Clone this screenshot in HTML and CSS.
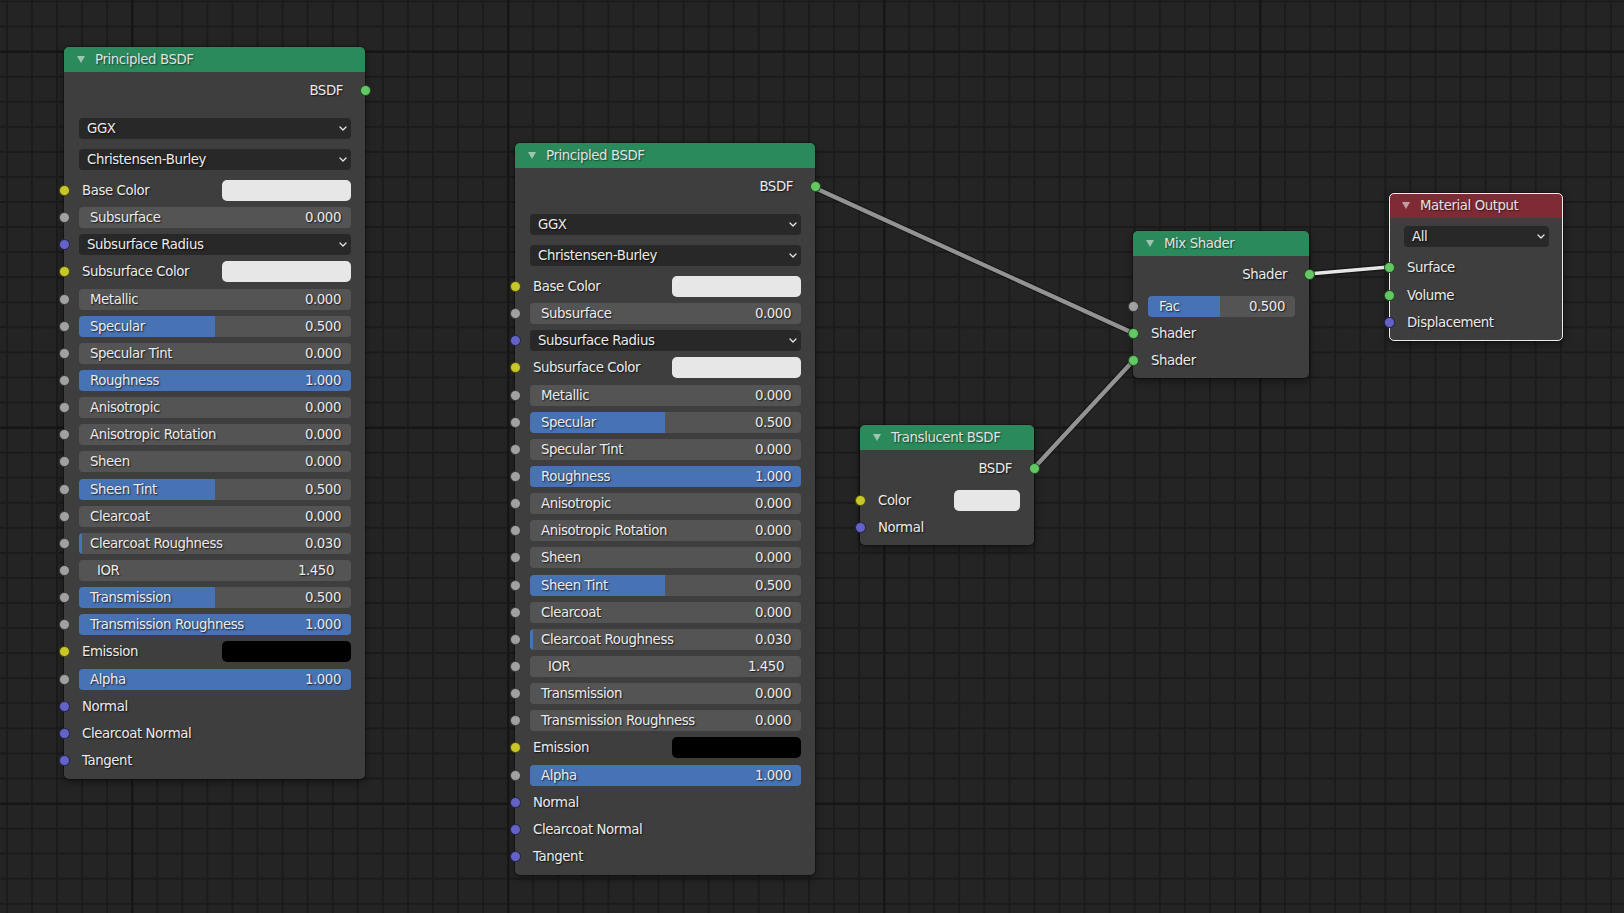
FILE: index.html
```html
<!DOCTYPE html>
<html>
<head>
<meta charset="utf-8">
<title>Shader Editor</title>
<link rel="stylesheet" href="styles.css">
</head>
<body>
<div class="canvas">
  <svg class="links" width="1624" height="913" viewBox="0 0 1624 913">
    <line class="link-outline" x1="815" y1="188" x2="1133" y2="333"/>
    <line class="link-core" x1="815" y1="188" x2="1133" y2="333"/>
    <line class="link-outline" x1="1034" y1="468" x2="1133" y2="361"/>
    <line class="link-core" x1="1034" y1="468" x2="1133" y2="361"/>
    <line class="link-outline" x1="1308" y1="274" x2="1389" y2="267"/>
    <line class="link-core hl" x1="1308" y1="274" x2="1389" y2="267"/>
  </svg>

  <!-- Principled BSDF #1 -->
  <div class="node node-p1">
    <div class="node-header shader">
      <svg class="tri" width="8" height="7" viewBox="0 0 8 7"><polygon points="0,0 8,0 4,7"/></svg>
      <span>Principled BSDF</span>
    </div>
    <div class="node-body">
      <div class="row out"><span class="label">BSDF</span><i class="socket s-shader"></i></div>
      <div class="buttons">
        <div class="row btn"><div class="dropdown"><span>GGX</span><svg class="chev" width="8" height="5" viewBox="0 0 8 5"><polyline points="1,1 4,4 7,1"/></svg></div></div>
        <div class="row btn"><div class="dropdown"><span>Christensen-Burley</span><svg class="chev" width="8" height="5" viewBox="0 0 8 5"><polyline points="1,1 4,4 7,1"/></svg></div></div>
      </div>
      <div class="inputs tight">
        <div class="row in"><i class="socket s-color"></i><span class="label">Base Color</span><div class="swatch"></div></div>
        <div class="row in"><i class="socket s-float"></i><div class="slider" style="--v:0%"><span class="sl-label">Subsurface</span><span class="sl-val">0.000</span></div></div>
        <div class="row in"><i class="socket s-vector"></i><div class="dropdown"><span>Subsurface Radius</span><svg class="chev" width="8" height="5" viewBox="0 0 8 5"><polyline points="1,1 4,4 7,1"/></svg></div></div>
        <div class="row in"><i class="socket s-color"></i><span class="label">Subsurface Color</span><div class="swatch"></div></div>
        <div class="row in"><i class="socket s-float"></i><div class="slider" style="--v:0%"><span class="sl-label">Metallic</span><span class="sl-val">0.000</span></div></div>
        <div class="row in"><i class="socket s-float"></i><div class="slider" style="--v:50%"><span class="sl-label">Specular</span><span class="sl-val">0.500</span></div></div>
        <div class="row in"><i class="socket s-float"></i><div class="slider" style="--v:0%"><span class="sl-label">Specular Tint</span><span class="sl-val">0.000</span></div></div>
        <div class="row in"><i class="socket s-float"></i><div class="slider" style="--v:100%"><span class="sl-label">Roughness</span><span class="sl-val">1.000</span></div></div>
        <div class="row in"><i class="socket s-float"></i><div class="slider" style="--v:0%"><span class="sl-label">Anisotropic</span><span class="sl-val">0.000</span></div></div>
        <div class="row in"><i class="socket s-float"></i><div class="slider" style="--v:0%"><span class="sl-label">Anisotropic Rotation</span><span class="sl-val">0.000</span></div></div>
        <div class="row in"><i class="socket s-float"></i><div class="slider" style="--v:0%"><span class="sl-label">Sheen</span><span class="sl-val">0.000</span></div></div>
        <div class="row in"><i class="socket s-float"></i><div class="slider" style="--v:50%"><span class="sl-label">Sheen Tint</span><span class="sl-val">0.500</span></div></div>
        <div class="row in"><i class="socket s-float"></i><div class="slider" style="--v:0%"><span class="sl-label">Clearcoat</span><span class="sl-val">0.000</span></div></div>
        <div class="row in"><i class="socket s-float"></i><div class="slider" style="--v:3px"><span class="sl-label">Clearcoat Roughness</span><span class="sl-val">0.030</span></div></div>
        <div class="row in"><i class="socket s-float"></i><div class="slider num" style="--v:0%"><span class="sl-label">IOR</span><span class="sl-val">1.450</span></div></div>
        <div class="row in"><i class="socket s-float"></i><div class="slider" style="--v:50%"><span class="sl-label">Transmission</span><span class="sl-val">0.500</span></div></div>
        <div class="row in"><i class="socket s-float"></i><div class="slider" style="--v:100%"><span class="sl-label">Transmission Roughness</span><span class="sl-val">1.000</span></div></div>
        <div class="row in"><i class="socket s-color"></i><span class="label">Emission</span><div class="swatch black"></div></div>
        <div class="row in"><i class="socket s-float"></i><div class="slider" style="--v:100%"><span class="sl-label">Alpha</span><span class="sl-val">1.000</span></div></div>
        <div class="row in"><i class="socket s-vector"></i><span class="label">Normal</span></div>
        <div class="row in"><i class="socket s-vector"></i><span class="label">Clearcoat Normal</span></div>
        <div class="row in"><i class="socket s-vector"></i><span class="label">Tangent</span></div>
      </div>
    </div>
  </div>

  <!-- Principled BSDF #2 -->
  <div class="node node-p2">
    <div class="node-header shader">
      <svg class="tri" width="8" height="7" viewBox="0 0 8 7"><polygon points="0,0 8,0 4,7"/></svg>
      <span>Principled BSDF</span>
    </div>
    <div class="node-body">
      <div class="row out"><span class="label">BSDF</span><i class="socket s-shader"></i></div>
      <div class="buttons">
        <div class="row btn"><div class="dropdown"><span>GGX</span><svg class="chev" width="8" height="5" viewBox="0 0 8 5"><polyline points="1,1 4,4 7,1"/></svg></div></div>
        <div class="row btn"><div class="dropdown"><span>Christensen-Burley</span><svg class="chev" width="8" height="5" viewBox="0 0 8 5"><polyline points="1,1 4,4 7,1"/></svg></div></div>
      </div>
      <div class="inputs tight">
        <div class="row in"><i class="socket s-color"></i><span class="label">Base Color</span><div class="swatch"></div></div>
        <div class="row in"><i class="socket s-float"></i><div class="slider" style="--v:0%"><span class="sl-label">Subsurface</span><span class="sl-val">0.000</span></div></div>
        <div class="row in"><i class="socket s-vector"></i><div class="dropdown"><span>Subsurface Radius</span><svg class="chev" width="8" height="5" viewBox="0 0 8 5"><polyline points="1,1 4,4 7,1"/></svg></div></div>
        <div class="row in"><i class="socket s-color"></i><span class="label">Subsurface Color</span><div class="swatch"></div></div>
        <div class="row in"><i class="socket s-float"></i><div class="slider" style="--v:0%"><span class="sl-label">Metallic</span><span class="sl-val">0.000</span></div></div>
        <div class="row in"><i class="socket s-float"></i><div class="slider" style="--v:50%"><span class="sl-label">Specular</span><span class="sl-val">0.500</span></div></div>
        <div class="row in"><i class="socket s-float"></i><div class="slider" style="--v:0%"><span class="sl-label">Specular Tint</span><span class="sl-val">0.000</span></div></div>
        <div class="row in"><i class="socket s-float"></i><div class="slider" style="--v:100%"><span class="sl-label">Roughness</span><span class="sl-val">1.000</span></div></div>
        <div class="row in"><i class="socket s-float"></i><div class="slider" style="--v:0%"><span class="sl-label">Anisotropic</span><span class="sl-val">0.000</span></div></div>
        <div class="row in"><i class="socket s-float"></i><div class="slider" style="--v:0%"><span class="sl-label">Anisotropic Rotation</span><span class="sl-val">0.000</span></div></div>
        <div class="row in"><i class="socket s-float"></i><div class="slider" style="--v:0%"><span class="sl-label">Sheen</span><span class="sl-val">0.000</span></div></div>
        <div class="row in"><i class="socket s-float"></i><div class="slider" style="--v:50%"><span class="sl-label">Sheen Tint</span><span class="sl-val">0.500</span></div></div>
        <div class="row in"><i class="socket s-float"></i><div class="slider" style="--v:0%"><span class="sl-label">Clearcoat</span><span class="sl-val">0.000</span></div></div>
        <div class="row in"><i class="socket s-float"></i><div class="slider" style="--v:3px"><span class="sl-label">Clearcoat Roughness</span><span class="sl-val">0.030</span></div></div>
        <div class="row in"><i class="socket s-float"></i><div class="slider num" style="--v:0%"><span class="sl-label">IOR</span><span class="sl-val">1.450</span></div></div>
        <div class="row in"><i class="socket s-float"></i><div class="slider" style="--v:0%"><span class="sl-label">Transmission</span><span class="sl-val">0.000</span></div></div>
        <div class="row in"><i class="socket s-float"></i><div class="slider" style="--v:0%"><span class="sl-label">Transmission Roughness</span><span class="sl-val">0.000</span></div></div>
        <div class="row in"><i class="socket s-color"></i><span class="label">Emission</span><div class="swatch black"></div></div>
        <div class="row in"><i class="socket s-float"></i><div class="slider" style="--v:100%"><span class="sl-label">Alpha</span><span class="sl-val">1.000</span></div></div>
        <div class="row in"><i class="socket s-vector"></i><span class="label">Normal</span></div>
        <div class="row in"><i class="socket s-vector"></i><span class="label">Clearcoat Normal</span></div>
        <div class="row in"><i class="socket s-vector"></i><span class="label">Tangent</span></div>
      </div>
    </div>
  </div>

  <!-- Translucent BSDF -->
  <div class="node node-tr">
    <div class="node-header shader">
      <svg class="tri" width="8" height="7" viewBox="0 0 8 7"><polygon points="0,0 8,0 4,7"/></svg>
      <span>Translucent BSDF</span>
    </div>
    <div class="node-body">
      <div class="row out"><span class="label">BSDF</span><i class="socket s-shader"></i></div>
      <div class="inputs">
        <div class="row in"><i class="socket s-color"></i><span class="label">Color</span><div class="swatch small"></div></div>
        <div class="row in"><i class="socket s-vector"></i><span class="label">Normal</span></div>
      </div>
    </div>
  </div>

  <!-- Mix Shader -->
  <div class="node node-mix">
    <div class="node-header shader">
      <svg class="tri" width="8" height="7" viewBox="0 0 8 7"><polygon points="0,0 8,0 4,7"/></svg>
      <span>Mix Shader</span>
    </div>
    <div class="node-body">
      <div class="row out"><span class="label">Shader</span><i class="socket s-shader"></i></div>
      <div class="inputs">
        <div class="row in"><i class="socket s-float"></i><div class="slider" style="--v:49%"><span class="sl-label">Fac</span><span class="sl-val">0.500</span></div></div>
        <div class="row in"><i class="socket s-shader"></i><span class="label">Shader</span></div>
        <div class="row in"><i class="socket s-shader"></i><span class="label">Shader</span></div>
      </div>
    </div>
  </div>

  <!-- Material Output -->
  <div class="node node-out active">
    <div class="node-header output">
      <svg class="tri" width="8" height="7" viewBox="0 0 8 7"><polygon points="0,0 8,0 4,7"/></svg>
      <span>Material Output</span>
    </div>
    <div class="node-body">
      <div class="row btn-s"><div class="dropdown"><span>All</span><svg class="chev" width="8" height="5" viewBox="0 0 8 5"><polyline points="1,1 4,4 7,1"/></svg></div></div>
      <div class="inputs after-btn">
        <div class="row in wide"><i class="socket s-shader"></i><span class="label">Surface</span></div>
        <div class="row in wide"><i class="socket s-shader"></i><span class="label">Volume</span></div>
        <div class="row in wide"><i class="socket s-vector"></i><span class="label">Displacement</span></div>
      </div>
    </div>
  </div>
</div>
</body>
</html>
```

FILE: styles.css
```css
* {
  box-sizing: border-box;
}

html, body {
  margin: 0;
  padding: 0;
  background: #242424;
}

body {
  font-family: "DejaVu Sans", "Liberation Sans", sans-serif;
  font-size: 13.3px;
  letter-spacing: -0.4px;
  color: #ebebeb;
}

.canvas {
  position: relative;
  width: 1624px;
  height: 913px;
  overflow: hidden;
  background-color: #242424;
  background-image:
    linear-gradient(to right, #151515 2px, transparent 2px),
    linear-gradient(to bottom, #151515 2px, transparent 2px),
    linear-gradient(to right, #1b1b1b 2px, transparent 2px),
    linear-gradient(to bottom, #1b1b1b 2px, transparent 2px);
  background-size:
    376.05px 100%,
    100% 376.05px,
    25.07px 100%,
    100% 25.07px;
  background-position:
    131.3px 0,
    0 50.7px,
    5.95px 0,
    0 0.56px;
}

/* links */
.links {
  position: absolute;
  left: 0;
  top: 0;
  z-index: 0;
}

.link-outline {
  stroke: rgba(0, 0, 0, 0.35);
  stroke-width: 6.5;
  stroke-linecap: round;
}

.link-core {
  stroke: #939393;
  stroke-width: 4.2;
  stroke-linecap: round;
}

.link-core.hl {
  stroke: #e6e6e6;
  stroke-width: 3.6;
}

/* nodes */
.node {
  position: absolute;
  z-index: 1;
  background: rgba(64, 64, 64, 0.95);
  border-radius: 5px;
  box-shadow: 0 3px 9px rgba(0, 0, 0, 0.45), 0 0 0 1px rgba(0, 0, 0, 0.25);
}

.node.active {
  outline: 1px solid #ececec;
  outline-offset: -1px;
}

.node-p1 { left: 64px; top: 47px; width: 301px; }
.node-p2 { left: 515px; top: 143px; width: 300px; }
.node-tr { left: 860px; top: 425px; width: 174px; }
.node-mix { left: 1133px; top: 231px; width: 176px; }
.node-out { left: 1389px; top: 193px; width: 174px; }

.node-header {
  height: 24.5px;
  display: flex;
  align-items: center;
  padding-left: 13px;
  border-radius: 5px 5px 0 0;
  color: #e2e2e2;
  text-shadow: 1px 1px 1.5px rgba(0, 0, 0, 0.55);
}

.node-header.shader {
  background: #2b8a5c;
}

.node-header.output {
  background: #7f2a35;
}

.node-header .tri {
  margin-right: 10px;
  flex: none;
}

.node-header .tri polygon {
  fill: rgba(235, 235, 235, 0.6);
}

.node-body {
  padding: 5.5px 0 4.5px;
}

.row {
  position: relative;
  display: flex;
  align-items: center;
  height: 27.15px;
  padding: 0 14px 0 15px;
}

.row.out {
  height: 27.1px;
  justify-content: flex-end;
  padding-right: 22px;
}

.buttons {
  margin-top: 8.9px;
}

.row.btn {
  height: 31px;
}

.row.btn-s {
  height: 27.1px;
}

.inputs {
  margin-top: 4.4px;
}

.inputs.tight {
  margin-top: 2px;
}

.inputs.after-btn {
  margin-top: 3.4px;
}

.row.in.wide {
  height: 27.8px;
}

.label,
.dropdown,
.slider {
  white-space: nowrap;
  text-shadow: 1px 1px 1.5px rgba(0, 0, 0, 0.75);
}

.label {
  padding-left: 3px;
}

/* sockets */
.socket {
  position: absolute;
  top: calc(50% - 5.5px);
  left: -5.5px;
  width: 11px;
  height: 11px;
  border-radius: 50%;
  border: 1px solid rgba(0, 0, 0, 0.6);
}

.row.out .socket {
  left: auto;
  right: -5.5px;
}

.s-shader { background: #63c763; }
.s-color { background: #c7c729; }
.s-float { background: #a1a1a1; }
.s-vector { background: #6363c7; }

/* controls */
.dropdown {
  flex: 1;
  height: 21px;
  display: flex;
  align-items: center;
  justify-content: space-between;
  padding: 0 4px 0 8px;
  background: #282828;
  border-radius: 4px;
}

.chev {
  flex: none;
}

.chev polyline {
  fill: none;
  stroke: #e6e6e6;
  stroke-width: 1.3;
  stroke-linecap: round;
  stroke-linejoin: round;
}

.slider {
  flex: 1;
  height: 21px;
  display: flex;
  align-items: center;
  justify-content: space-between;
  padding: 0 10px 0 11px;
  border-radius: 4px;
  background: linear-gradient(to right, #4772b3 var(--v), #545454 var(--v));
}

.slider.num {
  padding: 0 17px 0 18px;
}

.swatch {
  margin-left: auto;
  width: 129px;
  height: 21px;
  border-radius: 5px;
  background: #e7e7e7;
}

.swatch.small {
  width: 66px;
}

.swatch.black {
  background: #000000;
}
```
